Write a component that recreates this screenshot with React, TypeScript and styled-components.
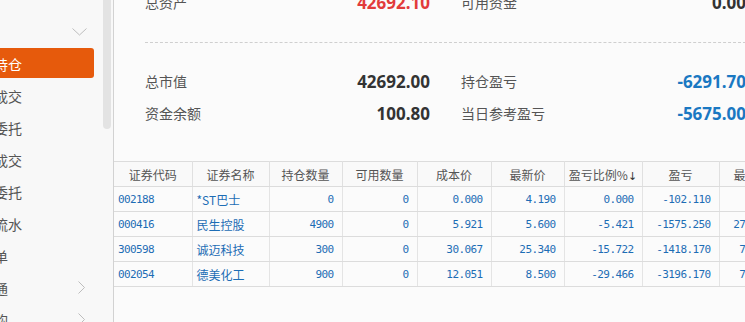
import React from 'react'
import styled, { createGlobalStyle } from 'styled-components'

const GlobalStyle = createGlobalStyle`
  html, body {
    margin: 0;
    padding: 0;
  }
  body {
    background: #fafafa;
    font-family: "Noto Sans CJK SC", "Noto Sans", sans-serif;
    overflow: hidden;
  }
`

const Page = styled.div`
  display: flex;
  width: 745px;
  height: 322px;
  overflow: hidden;
`

const Sidebar = styled.aside`
  position: relative;
  flex: 0 0 113px;
  border-right: 1px solid #d2d2d2;
  background: #f8f8f8;
  overflow: hidden;
`

const ScrollThumb = styled.div`
  position: absolute;
  top: 0;
  right: 2px;
  width: 8px;
  height: 129px;
  border-radius: 0 0 4px 4px;
  background: #e3e3e3;
`

const Menu = styled.ul`
  list-style: none;
  margin: 0 0 0 -34px;
  padding: 16px 0 0;
  width: 128px;
`

const GroupTitle = styled.li`
  display: flex;
  align-items: center;
  justify-content: space-between;
  height: 32px;
  padding-right: 7px;
  font-size: 14px;
  color: #555;
`

const MenuItem = styled.li<{ $active?: boolean }>`
  display: flex;
  align-items: center;
  justify-content: space-between;
  box-sizing: border-box;
  height: 30px;
  margin-bottom: 2px;
  padding: 1px 9px 0 0;
  border-radius: 0 3px 3px 0;
  font-size: 14px;
  color: ${(p) => (p.$active ? '#fff' : '#555')};
  background: ${(p) => (p.$active ? '#e65a0c' : 'transparent')};
`

const Main = styled.main`
  flex: 1;
  min-width: 0;
  overflow: hidden;
  background: #fbfbfb;
`

const Summary = styled.section`
  margin-top: -14px;
  padding-left: 31px;
`

const StatGrid = styled.div<{ $dashed?: boolean }>`
  display: grid;
  grid-template-columns: 285px 285px;
  column-gap: 31px;
  width: 601px;
  padding: ${(p) => (p.$dashed ? '0 0 24px' : '22px 0 0')};
  border-bottom: ${(p) => (p.$dashed ? '1px dashed #cfcfcf' : 'none')};
`

const StatRow = styled.div`
  display: flex;
  align-items: center;
  justify-content: space-between;
  height: 32px;
`

const StatLabel = styled.span`
  font-size: 14px;
  color: #555;
`

const StatValue = styled.span<{ $tone: 'red' | 'blue' | 'dark' }>`
  font-family: "Noto Sans", "Open Sans", sans-serif;
  font-size: 17px;
  font-weight: 700;
  color: ${(p) =>
    p.$tone === 'red' ? '#e23b3b' : p.$tone === 'blue' ? '#1a78c2' : '#333'};
`

const Table = styled.table`
  margin-top: 32px;
  border-collapse: collapse;
  table-layout: fixed;
  width: 682px;
  border-top: 1px solid #dcdcdc;
`

const Col = styled.col<{ $w: number }>`
  width: ${(p) => p.$w}px;
`

const HeadCell = styled.th`
  height: 24px;
  padding: 0;
  border-right: 1px solid #e0e0e0;
  border-bottom: 1px solid #dcdcdc;
  background: #f9f9f9;
  font-size: 12px;
  font-weight: 400;
  color: #555;
  text-align: center;
  white-space: nowrap;
  overflow: hidden;
`

const Cell = styled.td<{ $align: 'left' | 'right'; $cjk?: boolean }>`
  height: 24px;
  padding: ${(p) => (p.$align === 'left' ? '0 0 0 4px' : '0 8px 0 0')};
  border-right: 1px solid #e4e4e4;
  border-bottom: 1px solid #dcdcdc;
  font-family: ${(p) =>
    p.$cjk ? '"Noto Sans CJK SC", sans-serif' : '"DejaVu Sans Mono", monospace'};
  font-size: ${(p) => (p.$cjk ? '12px' : '11px')};
  letter-spacing: ${(p) => (p.$cjk ? '0' : '-0.6px')};
  color: #1d6db5;
  text-align: ${(p) => p.$align};
  white-space: nowrap;
  overflow: hidden;
`

const SortArrow = styled.span`
  font-family: "DejaVu Sans", sans-serif;
  font-size: 11px;
  color: #333;
`

const ChevronDown = () => (
  <svg width="15" height="8" viewBox="0 0 15 8">
    <polyline points="0.5,0.5 7.5,7 14.5,0.5" fill="none" stroke="#bdbdbd" strokeWidth="1" />
  </svg>
)

const ChevronRight = () => (
  <svg width="7" height="13" viewBox="0 0 7 13">
    <polyline points="0.5,0.5 6.5,6.5 0.5,12.5" fill="none" stroke="#bdbdbd" strokeWidth="1" />
  </svg>
)

const menu = [
  { label: '我的持仓', active: true },
  { label: '当日成交' },
  { label: '当日委托' },
  { label: '历史成交' },
  { label: '历史委托' },
  { label: '资金流水' },
  { label: '交割单' },
  { label: '港股通', more: true },
  { label: '逆回购', more: true },
]

const columns = [
  { title: '证券代码', width: 78 },
  { title: '证券名称', width: 77 },
  { title: '持仓数量', width: 73 },
  { title: '可用数量', width: 75 },
  { title: '成本价', width: 74 },
  { title: '最新价', width: 73 },
  { title: '盈亏比例%', width: 78, sorted: true },
  { title: '盈亏', width: 77 },
  { title: '最新市值', width: 77 },
]

const positions = [
  ['002188', '*ST巴士', '0', '0', '0.000', '4.190', '0.000', '-102.110', '0.000'],
  ['000416', '民生控股', '4900', '0', '5.921', '5.600', '-5.421', '-1575.250', '27440.000'],
  ['300598', '诚迈科技', '300', '0', '30.067', '25.340', '-15.722', '-1418.170', '7602.000'],
  ['002054', '德美化工', '900', '0', '12.051', '8.500', '-29.466', '-3196.170', '7650.000'],
]

const App = () => {
  return (
    <>
      <GlobalStyle />
      <Page>
        <Sidebar>
          <Menu>
            <GroupTitle>
              <span>交易</span>
              <ChevronDown />
            </GroupTitle>
            {menu.map((item) => (
              <MenuItem key={item.label} $active={item.active}>
                <span>{item.label}</span>
                {item.more && <ChevronRight />}
              </MenuItem>
            ))}
          </Menu>
          <ScrollThumb />
        </Sidebar>
        <Main>
          <Summary>
            <StatGrid $dashed>
              <StatRow>
                <StatLabel>总资产</StatLabel>
                <StatValue $tone="red">42692.10</StatValue>
              </StatRow>
              <StatRow>
                <StatLabel>可用资金</StatLabel>
                <StatValue $tone="dark">0.00</StatValue>
              </StatRow>
            </StatGrid>
            <StatGrid>
              <StatRow>
                <StatLabel>总市值</StatLabel>
                <StatValue $tone="dark">42692.00</StatValue>
              </StatRow>
              <StatRow>
                <StatLabel>持仓盈亏</StatLabel>
                <StatValue $tone="blue">-6291.70</StatValue>
              </StatRow>
              <StatRow>
                <StatLabel>资金余额</StatLabel>
                <StatValue $tone="dark">100.80</StatValue>
              </StatRow>
              <StatRow>
                <StatLabel>当日参考盈亏</StatLabel>
                <StatValue $tone="blue">-5675.00</StatValue>
              </StatRow>
            </StatGrid>
          </Summary>
          <Table>
            <colgroup>
              {columns.map((c) => (
                <Col key={c.title} $w={c.width} />
              ))}
            </colgroup>
            <thead>
              <tr>
                {columns.map((c) => (
                  <HeadCell key={c.title}>
                    {c.title}
                    {c.sorted && <SortArrow>↓</SortArrow>}
                  </HeadCell>
                ))}
              </tr>
            </thead>
            <tbody>
              {positions.map((row) => (
                <tr key={row[0]}>
                  {row.map((v, i) => (
                    <Cell key={i} $align={i < 2 ? 'left' : 'right'} $cjk={i === 1}>
                      {v}
                    </Cell>
                  ))}
                </tr>
              ))}
            </tbody>
          </Table>
        </Main>
      </Page>
    </>
  )
}

export default App
